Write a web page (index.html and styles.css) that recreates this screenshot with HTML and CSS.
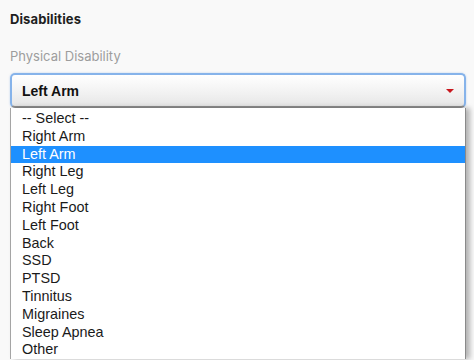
FILE: index.html
```html
<!DOCTYPE html>
<html lang="en">
<head>
    <meta charset="UTF-8">
    <meta name="viewport" content="width=device-width, initial-scale=1.0">
    <title>Disabilities</title>
    <link rel="stylesheet" href="styles.css">
</head>
<body>
    <div class="form-section">
        <h2 class="section-title">Disabilities</h2>

        <div class="field">
            <label class="field-label">Physical Disability</label>

            <div class="select-box">
                <span class="select-value">Left Arm</span>
                <span class="select-arrow"></span>
            </div>

            <ul class="select-options">
                <li>-- Select --</li>
                <li>Right Arm</li>
                <li class="selected">Left Arm</li>
                <li>Right Leg</li>
                <li>Left Leg</li>
                <li>Right Foot</li>
                <li>Left Foot</li>
                <li>Back</li>
                <li>SSD</li>
                <li>PTSD</li>
                <li>Tinnitus</li>
                <li>Migraines</li>
                <li>Sleep Apnea</li>
                <li>Other</li>
            </ul>
        </div>
    </div>
</body>
</html>
```

FILE: styles.css
```css
* {
    margin: 0;
    padding: 0;
    box-sizing: border-box;
}

body {
    font-family: Inter, "Open Sans", sans-serif;
    background: #f9f9f9;
    color: #222;
    height: 100vh;
    overflow: hidden;
}

.form-section {
    padding: 11px 8px 0 10px;
}

.section-title {
    font-size: 13px;
    font-weight: 700;
    line-height: 16px;
    letter-spacing: 0.1px;
    color: #1f1f1f;
}

.field {
    margin-top: 21px;
    display: flex;
    flex-direction: column;
}

.field-label {
    font-size: 13px;
    line-height: 16px;
    color: #9d9d9d;
    margin-bottom: 9px;
}

.select-box {
    height: 35px;
    display: flex;
    align-items: center;
    justify-content: space-between;
    padding: 0 10px;
    border: 2px solid #86b3ea;
    border-bottom-color: #8f8f8f;
    border-radius: 5px;
    background: linear-gradient(180deg, #ffffff 0%, #f1f1f1 60%, #e6e6e6 100%);
    box-shadow: 0 0 2px rgba(120, 170, 230, 0.5);
}

.select-value {
    font-family: "Liberation Sans", Arial, sans-serif;
    font-size: 14px;
    font-weight: 700;
    color: #111;
}

.select-arrow {
    width: 0;
    height: 0;
    border-left: 4px solid transparent;
    border-right: 4px solid transparent;
    border-top: 4px solid #c8161d;
}

.select-options {
    list-style: none;
    background: #fff;
    padding-top: 2px;
    border-left: 1px solid #a5a5a5;
    border-right: 1px solid #8a8a8a;
    box-shadow: 4px 0 5px rgba(0, 0, 0, 0.28);
    font-family: "Liberation Sans", Arial, sans-serif;
    font-size: 14.4px;
    color: #1a1a1a;
}

.select-options li {
    height: 17.8px;
    line-height: 17.8px;
    padding-left: 11px;
}

.select-options li.selected {
    background: #1e90ff;
    color: #fff;
}
```
